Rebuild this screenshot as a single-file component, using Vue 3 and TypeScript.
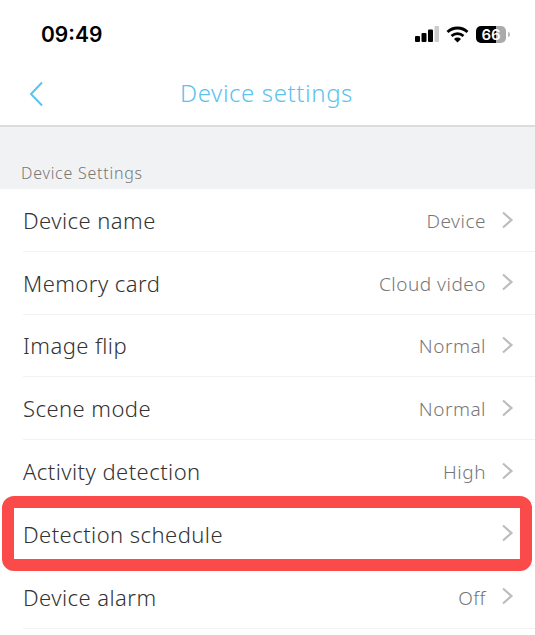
<script setup lang="ts">
interface Row {
  label: string
  value?: string
  marked?: boolean
}

const rows: Row[] = [
  { label: 'Device name', value: 'Device' },
  { label: 'Memory card', value: 'Cloud video' },
  { label: 'Image flip', value: 'Normal' },
  { label: 'Scene mode', value: 'Normal' },
  { label: 'Activity detection', value: 'High' },
  { label: 'Detection schedule', marked: true },
  { label: 'Device alarm', value: 'Off' },
]
</script>

<template>
  <div class="screen">
    <div class="status">
      <span class="time">09:49</span>
      <div class="status-icons">
        <svg width="24" height="16" viewBox="0 0 24 16">
          <rect x="0" y="10" width="5" height="6" rx="1" fill="#000" />
          <rect x="6.5" y="7" width="5" height="9" rx="1" fill="#000" />
          <rect x="13" y="3.500" width="5" height="12.500" rx="1" fill="#000" />
          <rect x="19.500" y="0" width="4.500" height="16" rx="1" fill="#ccc" />
        </svg>
        <svg width="23" height="17" viewBox="0 0 23 17">
          <path d="M1.500 6 A14.500 14.500 0 0 1 21.500 6" fill="none" stroke="#000" stroke-width="2.800" />
          <path d="M5.500 10 A9 9 0 0 1 17.500 10" fill="none" stroke="#000" stroke-width="2.800" />
          <path d="M8 13 A5 5 0 0 1 15 13 L11.500 16.500 Z" fill="#000" />
        </svg>
        <div class="battery">
          <span class="battery-level">66</span>
        </div>
        <span class="battery-cap"></span>
      </div>
    </div>

    <header class="nav">
      <svg class="back" width="15" height="26" viewBox="0 0 15 26">
        <path d="M13 1.500 L2 13 L13 24.500" fill="none" stroke="#5bc3ee" stroke-width="2" />
      </svg>
      <span class="nav-title">Device settings</span>
    </header>

    <div class="section-title">Device Settings</div>

    <div class="list">
      <div v-for="row in rows" :key="row.label" class="row" :class="{ marked: row.marked }">
        <span class="row-label">{{ row.label }}</span>
        <span v-if="row.value" class="row-value">{{ row.value }}</span>
        <svg class="chevron" width="13" height="18" viewBox="0 0 13 18">
          <path d="M2 1.500 L10.500 9 L2 16.500" fill="none" stroke="#bdbdbd" stroke-width="2.200" />
        </svg>
        <div v-if="row.marked" class="highlight"></div>
      </div>
    </div>
  </div>
</template>

<style scoped>
.screen {
  width: 535px;
  height: 635px;
  overflow: hidden;
  background: #fff;
  font-family: "Noto Sans", "Open Sans", sans-serif;
}

.status {
  height: 60px;
  display: flex;
  align-items: center;
  justify-content: space-between;
  padding: 8px 25px 0 41px;
  box-sizing: border-box;
}

.time {
  font-family: "Inter", sans-serif;
  font-size: 21px;
  font-weight: 600;
  color: #000;
}

.status-icons {
  display: flex;
  align-items: center;
  gap: 7px;
}

.battery {
  width: 30px;
  height: 17px;
  border-radius: 5px;
  background: linear-gradient(to right, #000 66%, #aaa 66%);
  display: flex;
  align-items: center;
  justify-content: center;
  margin-right: -5px;
}

.battery-level {
  font-family: "Inter", sans-serif;
  font-size: 15px;
  font-weight: 600;
  color: #fff;
}

.battery-cap {
  width: 2px;
  height: 5px;
  background: #bbb;
  border-radius: 0 2px 2px 0;
}

.nav {
  height: 67px;
  padding-right: 2px;
  position: relative;
  display: flex;
  align-items: center;
  justify-content: center;
  border-bottom: 2px solid #dcdcdc;
  box-sizing: border-box;
}

.back {
  position: absolute;
  left: 29px;
  top: 21px;
}

.nav-title {
  font-size: 24px;
  font-weight: 300;
  letter-spacing: 0.6px;
  color: #5bc3ee;
}

.section-title {
  height: 62px;
  box-sizing: border-box;
  background: #f1f2f4;
  display: flex;
  align-items: flex-end;
  padding: 0 0 5px 21px;
  font-size: 16px;
  font-weight: 300;
  letter-spacing: 0.75px;
  color: #777;
}

.row {
  height: 62.8px;
  margin-left: 23px;
  padding-right: 35px;
  box-sizing: border-box;
  border-bottom: 1px solid #f2f2f2;
  position: relative;
  display: flex;
  align-items: center;
  font-weight: 300;
}

.row-label {
  flex: 1;
  font-size: 22px;
  letter-spacing: 0.45px;
  color: #333;
}

.row-value {
  font-size: 19px;
  letter-spacing: 0.5px;
  color: #777;
  margin-right: 14px;
  padding-top: 2px;
}

.chevron {
  position: absolute;
  right: 21px;
  top: 21.5px;
}

.highlight {
  position: absolute;
  left: -21px;
  right: 3px;
  top: -7px;
  height: 75px;
  box-sizing: border-box;
  border: 12px solid #fa4a4a;
  border-radius: 12px;
}
</style>
